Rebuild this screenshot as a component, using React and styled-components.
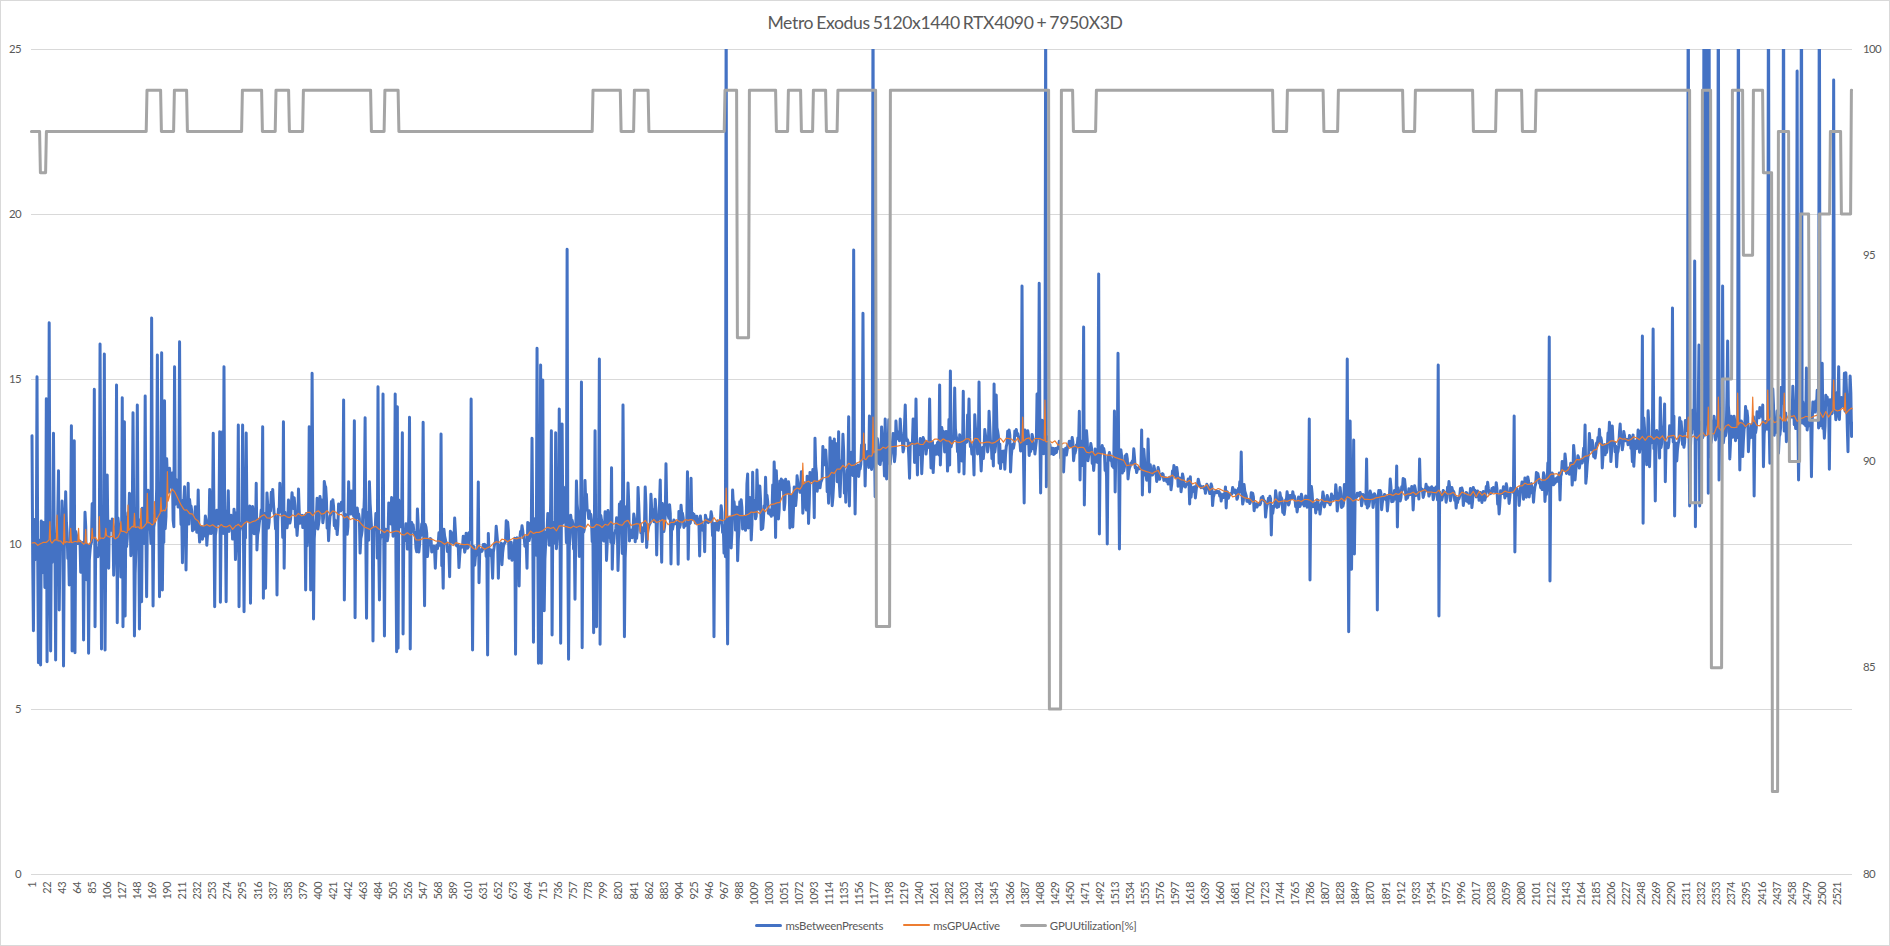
import React from "react";
import styled, { createGlobalStyle } from "styled-components";

const GlobalStyle = createGlobalStyle`
  html, body { margin: 0; padding: 0; background: #fff; }
`;

const FONT = `Lato, "Open Sans", "Liberation Sans", sans-serif`;
const TOP = 49;
const BOTTOM = 874;
const LEFT = 31;
const RIGHT = 1852;
const STEP = (RIGHT - LEFT) / 2542;

const Frame = styled.div`
  box-sizing: border-box;
  width: 1890px;
  height: 946px;
  border: 1px solid #d9d9d9;
  background: #fff;
  display: flex;
  flex-direction: column;
  overflow: hidden;
  font-family: ${FONT};
  color: #595959;
`;
const Title = styled.h1`
  height: 40px;
  margin: 0;
  padding-top: 11px;
  box-sizing: border-box;
  text-align: center;
  font-size: 17.6px;
  line-height: 22px;
  font-weight: 400;
  letter-spacing: -0.36px;
  word-spacing: -1.2px;
`;
const Plot = styled.svg`
  display: block;
  width: 1888px;
  height: 870px;
  flex: none;
`;
const GridLine = styled.line`
  stroke: #d9d9d9;
  stroke-width: 1;
`;
const Series = styled.polyline`
  fill: none;
  stroke: ${(p) => p.$color};
  stroke-width: ${(p) => p.$width};
  stroke-linejoin: round;
  stroke-linecap: round;
`;
const AxisText = styled.text`
  font-family: ${FONT};
  font-size: ${(p) => p.$size || 11.4}px;
  letter-spacing: -0.55px;
  fill: #595959;
`;
const Legend = styled.div`
  flex: 1;
  display: flex;
  justify-content: center;
  align-items: flex-start;
  gap: 20px;
  padding-top: 7px;
  padding-left: 2px;
`;
const LegendItem = styled.div`
  display: flex;
  align-items: center;
  gap: 3px;
  height: 14px;
`;
const Swatch = styled.span`
  display: block;
  width: 27px;
  height: ${(p) => p.$thick}px;
  border-radius: 2px;
  background: ${(p) => p.$color};
`;
const LegendLabel = styled.span`
  font-size: 11.4px;
  letter-spacing: -0.22px;
  color: #595959;
`;

/* ---- data ---- */
function rng(seed) {
  let a = seed;
  return () => {
    a = (a + 0x6d2b79f5) | 0;
    let t = Math.imul(a ^ (a >>> 15), 1 | a);
    t = (t + Math.imul(t ^ (t >>> 7), 61 | t)) ^ t;
    return ((t ^ (t >>> 14)) >>> 0) / 4294967296;
  };
}
function lerp(table, x) {
  if (x <= table[0][0]) return table[0][1];
  for (let i = 1; i < table.length; i++) {
    if (x <= table[i][0]) {
      const [x0, y0] = table[i - 1];
      const [x1, y1] = table[i];
      return y0 + ((y1 - y0) * (x - x0)) / (x1 - x0);
    }
  }
  return table[table.length - 1][1];
}
const crop = (x0, y0, list) => list.map(([x, y]) => [x0 + x / 3, y0 + y / 3]);

const MEAN = [[31,543],[100,541],[120,533],[150,523],[165,512],[170,490],[175,492],[185,510],[200,523],[235,527],[265,517],[330,512],[370,527],[420,538],[480,548],[540,530],[640,522],[700,522],[760,513],[800,487],[860,460],[880,450],[920,442],[1040,440],[1080,448],[1170,477],[1260,502],[1340,500],[1420,492],[1500,495],[1560,473],[1600,445],[1620,440],[1690,437],[1740,425],[1852,410]];
const BAND = [[31,32],[165,32],[175,26],[420,24],[470,15],[540,20],[560,32],[640,32],[660,14],[710,14],[730,30],[830,26],[860,24],[1000,22],[1060,18],[1100,15],[1170,12],[1300,10],[1400,11],[1500,13],[1600,18],[1690,20],[1851,26]];

const BLUE_SPIKES = [
  ...crop(0, 320, [[97,347],[112,170],[121,207],[140,236],[148,8],[160,340],[175,452],[190,150],[197,515],[214,317],[223,362],[250,236],[265,311],[283,208],[301,72],[313,102],[322,465],[349,195],[367,233],[374,305],[398,278],[412,255],[424,113],[436,228],[454,-6],[472,105],[484,98],[493,242],[508,445],[523,140],[538,65],[553,500],[565,490],[595,510],[640,340],[658,335],[667,335],[673,140],[685,512],[715,315],[727,315],[739,339],[751,270],[769,490],[787,320],[796,333],[832,305],[850,305],[877,518],[895,507],[916,230],[928,320],[937,160],[952,535],[976,497],[1030,240],[1045,485],[1063,302],[1096,293],[1108,485],[1120,57],[1135,200],[1150,222],[1186,222],[1192,260],[1207,338],[1228,292],[1249,535],
    [100,932],[115,1028],[121,1035],[142,1025],[151,993],[166,1020],[178,870],[190,1038],[217,993],[226,998],[250,960],[265,1000],[286,920],[304,987],[316,990],[325,745],[352,908],[370,920],[376,888],[403,948],[418,927],[424,845],[439,830],[460,858],[478,830],[487,810],[520,600],[547,728],[559,750],[643,860],[661,847],[679,845],[718,860],[733,875],[751,850],[790,835],[796,805],[832,825],[853,745],[916,810],[931,810],[940,897],[1033,840],[1066,893],[1099,895],[1120,963],[1138,840],[1153,948],[1189,995],[1195,985],[1210,942],[1231,987],[1249,695]]),
  ...crop(420, 220, [[10,607],[64,642],[154,537],[175,786],[202,573],[286,512],[322,850],[337,655],[352,385],[361,435],[368,480],[394,632],[406,638],[418,567],[427,612],[442,88],[466,570],[484,486],[520,450],[526,632],[538,417],[574,743],[610,555],[721,780],[739,731],[775,768],[802,755],[814,775],[853,750],[883,483],[919,-700],[952,708],[982,762],[997,757],[1036,772],[1069,752],[1186,655],[1243,657],[1255,635],[1285,590],[1300,90],[1330,280],[1348,588],[1360,-700],[1396,597],[1456,555],[1489,537],
    [13,1157],[46,1045],[70,1105],[88,1070],[157,1290],[178,1088],[202,1305],[217,1075],[235,1075],[286,1303],[298,1098],[322,1045],[340,1267],[355,1330],[364,1330],[373,1172],[397,1245],[421,1270],[445,1318],[466,1138],[487,1283],[520,1238],[529,1220],[541,1273],[577,1048],[613,1250],[709,1005],[724,1027],[754,1032],[775,1033],[805,1018],[838,1008],[853,995],[883,1250],[922,1272],[952,1022],[994,960],[1060,885],[1159,870],[1183,893],[1237,857],[1261,830],[1288,858],[1306,882],[1336,798],[1366,830],[1399,777],[1468,775],[1492,765]]),
  ...crop(920, 250, [[28,447],[58,405],[91,363],[103,414],[118,405],[130,424],[148,447],[178,396],[223,402],[229,435],[307,108],[358,100],[352,432],[376,-700],[490,231],[478,484],[535,72],[562,246],[583,483],[595,310],[664,540],[685,567],[964,606],[1168,507],[1282,327],[1291,513],[1301,570],[1372,330],[1339,627],[1429,648],[1498,627],
    [34,654],[61,645],[88,645],[118,666],[133,672],[163,675],[184,663],[238,640],[313,759],[361,729],[379,710],[430,666],[481,690],[493,765],[538,852],[562,882],[586,726],[598,897],[667,735],[688,726],[808,762],[919,774],[1054,855],[1171,990],[1285,1145],[1294,958],[1303,912],[1372,1080],[1432,831],[1480,780]]),
  [1438,365],[1438.8,616],[1549,337],[1549.8,581],[1514,416],[1514.8,552],
  ...crop(1560, 0, [[385,-200],[433,-200],[438,-200],[443,-200],[448,-200],[474,-200],[535,-200],[625,-200],[629,-200],[670,-200],[725,-200],[778,-200],[248,1008],[280,987],[337,924],[343,1062],[403,783],[418,1035],[487,858],[502,1023],[712,213],[820,240],[739,1104],[787,1090],[835,1100],[853,1120],[300,1193],[313,1212],[610,1125],[76,1275],[118,1288],[157,1278],[181,1272],[217,1263],
    [78,1450],[217,1385],[268,1400],[316,1445],[445,1480],[478,1440],[540,1410],[583,1488],[610,1400],[630,1390],[680,1325],[715,1440],[755,1430],[808,1408],[865,1355],[250,1570],[343,1548],[406,1580],[285,1503],[388,1518],[420,1518],[580,1250],[1,1500]]),
];

const ORANGE_SPIKES = [
  ...crop(0, 320, [[150,605],[172,585],[192,582],[212,625],[235,625],[258,628],[277,625],[298,590],[318,625],[340,595],[362,605],[383,555],[403,580],[422,565],[443,520],[463,545],[482,533],[503,455]]),
  [803,463],[726,488],[864,433],[873,417],[1045,400],[1023,417],[1688,417],[1708,407],[1718,397],[1738,393],[1753,397],[1768,390],[1784,393],[1799,390],[1834,380],[1845,393],[640,532],[648,540],[664,530],
];

const N = 2542;
const indexOf = (x) => Math.max(0, Math.min(N - 1, Math.round((x - LEFT - 1) / STEP)));
const toPoints = (pts) => pts.map(([x, y]) => `${x.toFixed(2)},${y.toFixed(1)}`).join(" ");

function buildBlue() {
  const r = rng(4090);
  const pts = [];
  let d = 0;
  for (let i = 0; i < N; i++) {
    const x = LEFT + 1 + i * STEP;
    const amp = lerp(BAND, x);
    if (i % 2 === 0) {
      if (r() < 0.55) {
        d = (r() * 2 - 1) * 0.65 * amp;
      } else {
        const sign = r() < 0.5 ? -1 : 1;
        d = sign * amp * (0.45 + Math.pow(r(), 1.6) * 1.05);
      }
    }
    pts.push([x, lerp(MEAN, x) + (i % 2 === 0 ? d : d * 0.5)]);
  }
  BLUE_SPIKES.forEach(([x, y]) => {
    const i = indexOf(x);
    pts[i] = [pts[i][0], y];
  });
  return toPoints(pts);
}
function buildOrange() {
  const r = rng(7950);
  const pts = [];
  let a = 0;
  let b = 0;
  for (let i = 0; i < N; i++) {
    const x = LEFT + 1 + i * STEP;
    if (i % 4 === 0) {
      a = b;
      const j = x < 170 ? 4 : x > 1690 ? 4 : 2.8;
      b = (r() * 2 - 1) * j;
    }
    pts.push([x, lerp(MEAN, x) + a + ((b - a) * (i % 4)) / 4]);
  }
  ORANGE_SPIKES.forEach(([x, y]) => {
    const i = indexOf(x);
    pts[i] = [pts[i][0], y];
  });
  return toPoints(pts);
}

const GREY = [[31,98],[40,97],[46,98],[146.6,99],[161,98],[174,99],[187,98],[242,99],[262,98],[275.6,99],[289,98],[303,99],[371,98],[384.5,99],[398.5,98],[592.6,99],[620.7,98],[634,99],[648.5,98],[724.6,99],[737,93],[749,99],[776,98],[788,99],[801,98],[813,99],[826,98],[837.5,99],[876,86],[890,99],[1049,84],[1061,99],[1073,98],[1096,99],[1273,98],[1287,99],[1323.5,98],[1338,99],[1403,98],[1415,99],[1473,98],[1496,99],[1522,98],[1535.7,99],[1690,89],[1702,99],[1711,85],[1722,92],[1732,99],[1743,95],[1753,99],[1763,97],[1772,82],[1778,98],[1789,90],[1800,96],[1809,91],[1819,96],[1830,98],[1841,96],[1851,99]];
const greyY = (v) => BOTTOM - (v - 80) * 41.25;
function buildGrey() {
  const out = [];
  GREY.forEach(([x, v], i) => {
    const y = greyY(v);
    if (i > 0) out.push(`${x - 0.4},${greyY(GREY[i - 1][1])}`);
    out.push(`${x + 0.4},${y}`);
  });
  out.push(`1851.6,${greyY(99)}`);
  return out.join(" ");
}

const BLUE = buildBlue();
const ORANGE = buildOrange();
const GREY_PATH = buildGrey();
const GRID_Y = [0, 1, 2, 3, 4, 5].map((i) => TOP + i * 165);
const X_LABELS = Array.from({ length: 121 }, (_, i) => 1 + i * 21);

export default function App() {
  return (
    <>
      <GlobalStyle />
      <Frame>
        <Title>Metro Exodus 5120x1440 RTX4090 + 7950X3D</Title>
        <Plot viewBox="1 41 1888 870">
          <defs>
            <clipPath id="plot-area">
              <rect x={LEFT - 3} y={TOP} width={RIGHT - LEFT + 4} height={BOTTOM - TOP} />
            </clipPath>
          </defs>
          {GRID_Y.map((y) => (
            <GridLine key={y} x1={LEFT} x2={RIGHT} y1={y + 0.5} y2={y + 0.5} />
          ))}
          <g clipPath="url(#plot-area)">
            <Series points={BLUE} $color="#4472c4" $width={3} />
            <Series points={ORANGE} $color="#ed7d31" $width={1.2} />
            <Series points={GREY_PATH} $color="#a5a5a5" $width={3} />
          </g>
          {[25, 20, 15, 10, 5, 0].map((v, i) => (
            <AxisText key={v} x={21} y={GRID_Y[i] + 4} textAnchor="end">{v}</AxisText>
          ))}
          {[100, 95, 90, 85, 80].map((v, i) => (
            <AxisText key={v} x={1863} y={TOP + i * 206.25 + 3.5}>{v}</AxisText>
          ))}
          {X_LABELS.map((v, i) => {
            const x = 32.3 + i * 15.04;
            return (
              <AxisText key={v} $size={11} textAnchor="end" transform={`translate(${x + 3.6} 882) rotate(-90)`}>
                {v}
              </AxisText>
            );
          })}
        </Plot>
        <Legend>
          <LegendItem>
            <Swatch $color="#4472c4" $thick={3} />
            <LegendLabel>msBetweenPresents</LegendLabel>
          </LegendItem>
          <LegendItem>
            <Swatch $color="#ed7d31" $thick={1.5} />
            <LegendLabel>msGPUActive</LegendLabel>
          </LegendItem>
          <LegendItem>
            <Swatch $color="#a5a5a5" $thick={3} />
            <LegendLabel>GPUUtilization[%]</LegendLabel>
          </LegendItem>
        </Legend>
      </Frame>
    </>
  );
}
